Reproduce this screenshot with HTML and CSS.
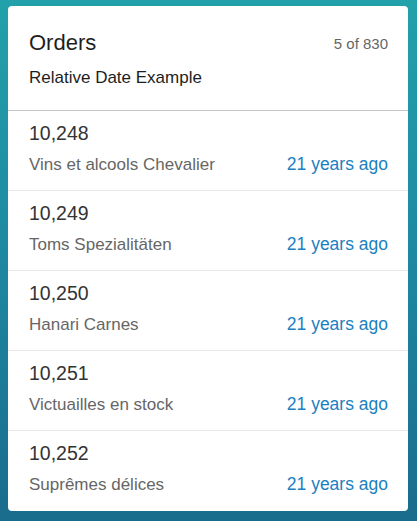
FILE: index.html
```html
<!DOCTYPE html>
<html>
<head>
<meta charset="utf-8">
<link rel="stylesheet" href="styles.css">
</head>
<body>
<div class="card">
  <div class="header">
    <div class="title-row">
      <span class="title">Orders</span>
      <span class="count">5 of 830</span>
    </div>
    <div class="subtitle">Relative Date Example</div>
  </div>
  <div class="list">
    <div class="row">
      <div class="num">10,248</div>
      <div class="line"><span class="name">Vins et alcools Chevalier</span><span class="date">21 years ago</span></div>
    </div>
    <div class="row">
      <div class="num">10,249</div>
      <div class="line"><span class="name">Toms Spezialitäten</span><span class="date">21 years ago</span></div>
    </div>
    <div class="row">
      <div class="num">10,250</div>
      <div class="line"><span class="name">Hanari Carnes</span><span class="date">21 years ago</span></div>
    </div>
    <div class="row">
      <div class="num">10,251</div>
      <div class="line"><span class="name">Victuailles en stock</span><span class="date">21 years ago</span></div>
    </div>
    <div class="row">
      <div class="num">10,252</div>
      <div class="line"><span class="name">Suprêmes délices</span><span class="date">21 years ago</span></div>
    </div>
  </div>
</div>
</body>
</html>
```
FILE: styles.css
```css
html, body {
  margin: 0;
  height: 100%;
}
body {
  background: linear-gradient(180deg, #22a1aa 0%, #1d88a0 50%, #1a6c8c 100%);
  font-family: "Liberation Sans", Arial, sans-serif;
  padding: 6px 9px 0 8px;
  box-sizing: border-box;
}
.card {
  background: #fff;
  border-radius: 4px;
  width: 400px;
  height: 505px;
  overflow: hidden;
}
.header {
  padding: 25px 20px 22px 21px;
  border-bottom: 1px solid #c6c6c6;
}
.title-row {
  display: flex;
  justify-content: space-between;
  align-items: center;
  height: 24px;
  line-height: 24px;
}
.title {
  font-size: 22px;
  color: #1e1e1e;
}
.count {
  font-size: 15px;
  color: #666;
  padding-top: 2px;
}
.subtitle {
  margin-top: 13px;
  font-size: 17px;
  line-height: 20px;
  height: 20px;
  color: #1e1e1e;
}
.row {
  padding: 10px 20px 15px 21px;
  border-bottom: 1px solid #e8e8e8;
}
.row:last-child {
  border-bottom: none;
}
.num {
  font-size: 19.5px;
  line-height: 24px;
  height: 24px;
  color: #333;
}
.line {
  margin-top: 8px;
  display: flex;
  justify-content: space-between;
  align-items: baseline;
  line-height: 22px;
  height: 22px;
  font-size: 17px;
}
.name {
  color: #666;
}
.date {
  color: #1b80bf;
  font-size: 17.5px;
}
```
